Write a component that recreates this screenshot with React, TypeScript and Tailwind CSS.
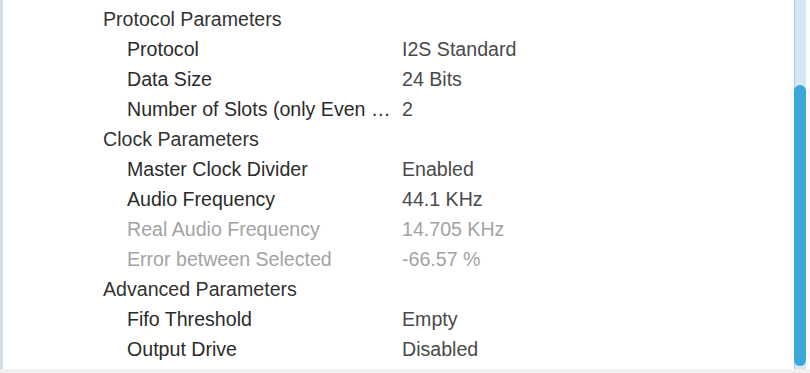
import React from 'react'

type Row = { label: string; value?: string; header?: boolean; disabled?: boolean }

const ROWS: Row[] = [
  { label: 'Protocol Parameters', header: true },
  { label: 'Protocol', value: 'I2S Standard' },
  { label: 'Data Size', value: '24 Bits' },
  { label: 'Number of Slots (only Even Numbers)', value: '2' },
  { label: 'Clock Parameters', header: true },
  { label: 'Master Clock Divider', value: 'Enabled' },
  { label: 'Audio Frequency', value: '44.1 KHz' },
  { label: 'Real Audio Frequency', value: '14.705 KHz', disabled: true },
  { label: 'Error between Selected', value: '-66.57 %', disabled: true },
  { label: 'Advanced Parameters', header: true },
  { label: 'Fifo Threshold', value: 'Empty' },
  { label: 'Output Drive', value: 'Disabled' },
]

export default function App() {
  return (
    <div
      className="w-[810px] h-[373px] bg-[#f0f0f0] flex overflow-hidden"
      style={{ fontFamily: '"Liberation Sans", Arial, sans-serif' }}
    >
      <div className="flex-1 h-[369px] bg-white border-l-[3px] border-[#d3dde6] flex">
        {/* parameter list */}
        <div className="flex-1 pt-[4px] text-[19.6px] leading-[30px]">
          {ROWS.map((row) =>
            row.header ? (
              <div key={row.label} className="h-[30px] pl-[100px] text-[#333]">
                {row.label}
              </div>
            ) : (
              <div key={row.label} className="h-[30px] flex">
                <div
                  className={`pl-[124px] w-[388px] pr-0 truncate ${
                    row.disabled ? 'text-[#a3a3a3]' : 'text-[#2b2b2b]'
                  }`}
                >
                  {row.label}
                </div>
                <div className={`ml-[11px] ${row.disabled ? 'text-[#a3a3a3]' : 'text-[#4a4a4a]'}`}>{row.value}</div>
              </div>
            )
          )}
        </div>

        {/* scrollbar */}
        <div className="w-[12px] h-full bg-[#d6e6f4] border-l border-[#9fd0ee] flex flex-col">
          <div className="h-[85px]" />
          <div className="h-[281px] w-[12px] -ml-px bg-[#3aa8db] rounded-full" />
        </div>
        <div className="w-[4px] bg-white" />
      </div>
    </div>
  )
}
